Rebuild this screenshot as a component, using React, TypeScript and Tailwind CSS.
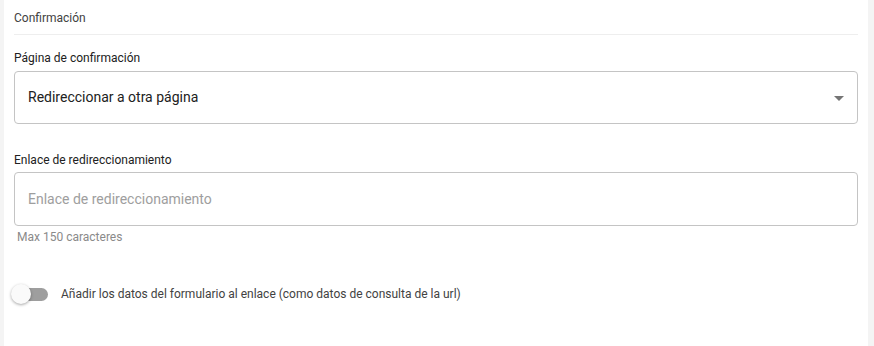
import React, { useState } from 'react';

const ArrowDropDown: React.FC = () => (
  <svg viewBox="0 0 24 24" className="w-6 h-6 fill-[#757575]">
    <path d="M7 10l5 5 5-5z" />
  </svg>
);

const App: React.FC = () => {
  const [appendData, setAppendData] = useState(false);

  return (
    <div
      className="flex h-[346px] w-full bg-[#f4f4f4] pl-[4px] pr-[6px]"
      style={{ fontFamily: 'Roboto, "Liberation Sans", sans-serif' }}
    >
      <div className="flex-1 bg-white px-[10px]">
        {/* Section header */}
        <div className="pt-[10px] pb-[8px] border-b border-[#eeeeee]">
          <div className="text-[12px] leading-4 text-[#424242]">Confirmación</div>
        </div>

        {/* Confirmation page select */}
        <div className="mt-[15px] text-[12px] leading-4 text-[#212121]">Página de confirmación</div>
        <div className="mt-[5px] h-[53px] flex items-center justify-between rounded border border-[#c4c4c4] pl-[13px] pr-[6px]">
          <span className="text-[14px] text-[#212121]">Redireccionar a otra página</span>
          <ArrowDropDown />
        </div>

        {/* Redirect link */}
        <div className="mt-[28px] text-[12px] leading-4 text-[#212121]">Enlace de redireccionamiento</div>
        <div className="mt-[4px] h-[54px] flex items-center rounded border border-[#c4c4c4] pl-[13px]">
          <span className="text-[14px] text-[#9e9e9e]">Enlace de redireccionamiento</span>
        </div>
        <div className="mt-[3px] pl-[3px] text-[12px] leading-4 text-[#8a8a8a]">Max 150 caracteres</div>

        {/* Append form data switch */}
        <div className="mt-[37px] flex items-center h-6">
          <button
            onClick={() => setAppendData(!appendData)}
            className="relative w-[38px] h-6 -ml-[3px] flex items-center"
          >
            <span className="block w-[35px] h-[13px] rounded-full bg-[#9e9e9e] ml-[2px]" />
            <span className="absolute left-0 top-[2px] w-5 h-5 rounded-full bg-[#fafafa] shadow-[0_1px_3px_rgba(0,0,0,0.35)]" />
          </button>
          <span className="ml-[12px] text-[12px] text-[#424242]">
            Añadir los datos del formulario al enlace (como datos de consulta de la url)
          </span>
        </div>
      </div>
    </div>
  );
};

export default App;
